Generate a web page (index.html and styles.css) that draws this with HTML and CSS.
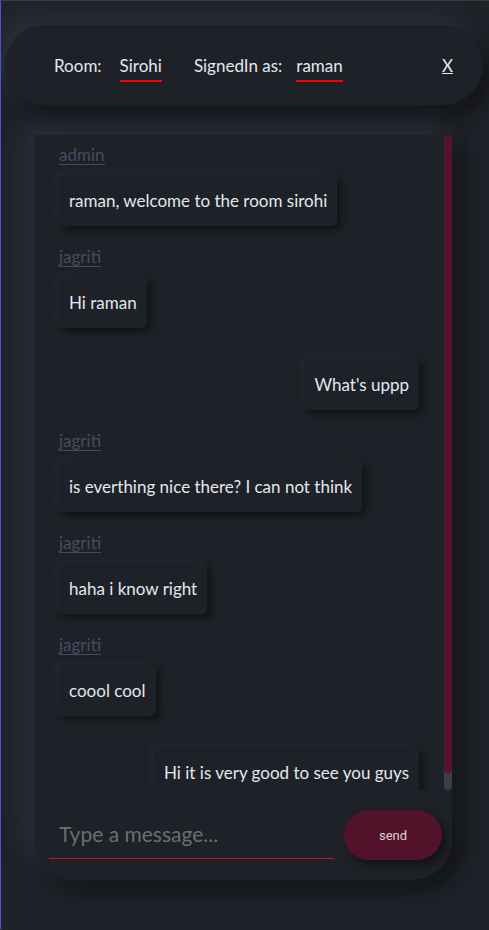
FILE: index.html
```html
<!DOCTYPE html>
<html lang="en">
<head>
<meta charset="utf-8">
<title>Chat</title>
<link rel="stylesheet" href="styles.css">
</head>
<body>
<div class="app">
  <header class="topbar">
    <span class="label">Room:</span>
    <span class="value room">Sirohi</span>
    <span class="label signed">SignedIn as:</span>
    <span class="value user">raman</span>
    <a class="close" href="#">X</a>
  </header>

  <section class="chat">
    <div class="chat-body">
      <div class="messages">
        <div class="msg">
          <span class="author">admin</span>
          <div class="bubble">raman, welcome to the room sirohi</div>
        </div>
        <div class="msg">
          <span class="author">jagriti</span>
          <div class="bubble">Hi raman</div>
        </div>
        <div class="msg mine">
          <div class="bubble">What's uppp</div>
        </div>
        <div class="msg">
          <span class="author">jagriti</span>
          <div class="bubble">is everthing nice there? I can not think</div>
        </div>
        <div class="msg">
          <span class="author">jagriti</span>
          <div class="bubble">haha i know right</div>
        </div>
        <div class="msg">
          <span class="author">jagriti</span>
          <div class="bubble">coool cool</div>
        </div>
        <div class="msg mine">
          <div class="bubble">Hi it is very good to see you guys</div>
        </div>
      </div>
      <div class="scrollbar"><div class="thumb"></div></div>
    </div>
    <form class="composer">
      <input class="input" type="text" placeholder="Type a message...">
      <button class="send" type="button">send</button>
    </form>
  </section>
</div>
</body>
</html>
```

FILE: styles.css
```css
html, body {
  margin: 0;
  padding: 0;
}
body {
  background: #1f2229;
  border-top: 1px solid #3b3b3b;
  border-left: 1px solid #4b52d6;
  min-height: 929px;
  font-family: Lato, "Liberation Sans", sans-serif;
  color: #e2e8f0;
  box-sizing: border-box;
}
.app {
  padding: 24px 6px 0 4px;
}
.topbar {
  height: 80px;
  border-radius: 40px;
  background: #1e2127;
  box-shadow: -10px -10px 24px rgba(58, 66, 78, 0.45), 10px 10px 24px rgba(0, 0, 0, 0.45);
  display: flex;
  align-items: center;
  padding: 0 30px 0 49px;
  font-size: 17px;
}
.label {
  color: #e2e8f0;
}
.value {
  border-bottom: 2px solid #f00;
  padding-bottom: 4px;
  margin-top: 7px;
}
.room {
  margin-left: 18px;
}
.signed {
  margin-left: 32px;
}
.user {
  margin-left: 14px;
}
.close {
  margin-left: auto;
  color: #e2e8f0;
  text-decoration: underline;
}
.chat {
  width: 418px;
  margin: 30px 0 0 29px;
  background: #1e2127;
  border-radius: 0 0 40px 40px;
  box-shadow: -10px -10px 24px rgba(58, 66, 78, 0.45), 10px 10px 24px rgba(0, 0, 0, 0.45);
}
.chat-body {
  display: flex;
  height: 655px;
}
.messages {
  flex: 1;
  min-width: 0;
  overflow: hidden;
  padding: 11px 25px 0 25px;
  display: flex;
  flex-direction: column;
}
.scrollbar {
  width: 8px;
  flex-shrink: 0;
  background: #3a3e4b;
  border-radius: 4px;
}
.thumb {
  height: 638px;
  background: #54132b;
  border-radius: 4px;
}
.msg {
  display: flex;
  flex-direction: column;
  align-items: flex-start;
  margin-top: 22px;
  flex-shrink: 0;
}
.msg:first-child {
  margin-top: 0;
}
.msg.mine {
  align-items: flex-end;
  margin-top: 31px;
}
.author {
  font-size: 17px;
  line-height: 18px;
  color: #474b62;
  border-bottom: 1px solid #474b62;
  margin-bottom: 10px;
}
.bubble {
  font-size: 17px;
  line-height: 21px;
  padding: 15px 10px 15px 10px;
  background: #1e2127;
  border-radius: 5px;
  box-shadow: 4px 4px 7px rgba(0, 0, 0, 0.45), -3px -3px 7px rgba(50, 56, 66, 0.35);
  white-space: nowrap;
}
.composer {
  display: flex;
  align-items: center;
  padding: 20px 10px 20px 15px;
  gap: 10px;
  margin: 0;
}
.input {
  flex: 1;
  min-width: 0;
  height: 48px;
  margin-top: -2px;
  background: transparent;
  border: none;
  border-bottom: 1px solid #c8141c;
  padding: 0 10px;
  font-family: Lato, "Liberation Sans", sans-serif;
  font-size: 21px;
  color: #e2e8f0;
  outline: none;
}
.input::placeholder {
  color: #6b6e73;
}
.send {
  width: 98px;
  height: 50px;
  border: none;
  border-radius: 25px;
  background: #52132a;
  color: #dcd0d6;
  font-family: Roboto, "Liberation Sans", sans-serif;
  font-size: 13px;
  box-shadow: 5px 5px 10px rgba(0, 0, 0, 0.45);
}
```
